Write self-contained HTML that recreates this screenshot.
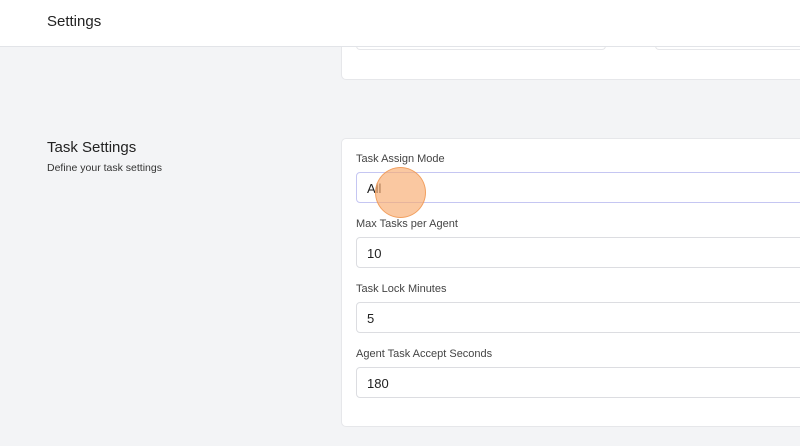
<!DOCTYPE html>
<html><head><style>
*{box-sizing:border-box;margin:0;padding:0}
body{width:800px;height:446px;overflow:hidden;background:#f3f4f6;font-family:"Liberation Sans",sans-serif;position:relative;color:#222}
.hdr{position:absolute;left:0;top:0;width:800px;height:47px;background:#fff;border-bottom:1px solid #e2e4e8}
.hdr span{position:absolute;left:47px;top:13px;font-size:15px;color:#222}
.card{position:absolute;left:341px;background:#fff;border:1px solid #e6e7ea;border-right:none;border-radius:5px 0 0 5px}
.inp{position:absolute;left:356px;width:460px;height:31px;border:1px solid #dcdde1;border-radius:4px;background:#fff;font-size:13px;padding:8px 0 0 10px;color:#222}
.lbl{position:absolute;left:356px;font-size:11px;color:#444}
</style></head><body>
<div class="card" style="top:20px;height:60px;width:470px"></div>
<div style="position:absolute;left:356px;top:40px;width:250px;height:10px;border:1px solid #e6e7ea;border-top:none;border-radius:0 0 4px 4px"></div>
<div style="position:absolute;left:655px;top:40px;width:160px;height:10px;border:1px solid #e6e7ea;border-top:none;border-radius:0 0 4px 4px"></div>
<div class="hdr"><span>Settings</span></div>
<div style="position:absolute;left:47px;top:139px;font-size:15px;color:#222">Task Settings</div>
<div style="position:absolute;left:47px;top:162px;font-size:10.5px;color:#333">Define your task settings</div>
<div class="card" style="top:138px;height:289px;width:470px"></div>
<div class="lbl" style="top:153px">Task Assign Mode</div>
<div class="inp" style="top:172px;border-color:#c5c6f2">All</div>
<div class="lbl" style="top:218px">Max Tasks per Agent</div>
<div class="inp" style="top:237px">10</div>
<div class="lbl" style="top:283px">Task Lock Minutes</div>
<div class="inp" style="top:302px">5</div>
<div class="lbl" style="top:348px">Agent Task Accept Seconds</div>
<div class="inp" style="top:367px">180</div>
<div style="position:absolute;left:375px;top:167px;width:51px;height:51px;border-radius:50%;background:rgba(248,170,110,0.65);border:1.5px solid rgba(240,150,80,0.8)"></div>
</body></html>
